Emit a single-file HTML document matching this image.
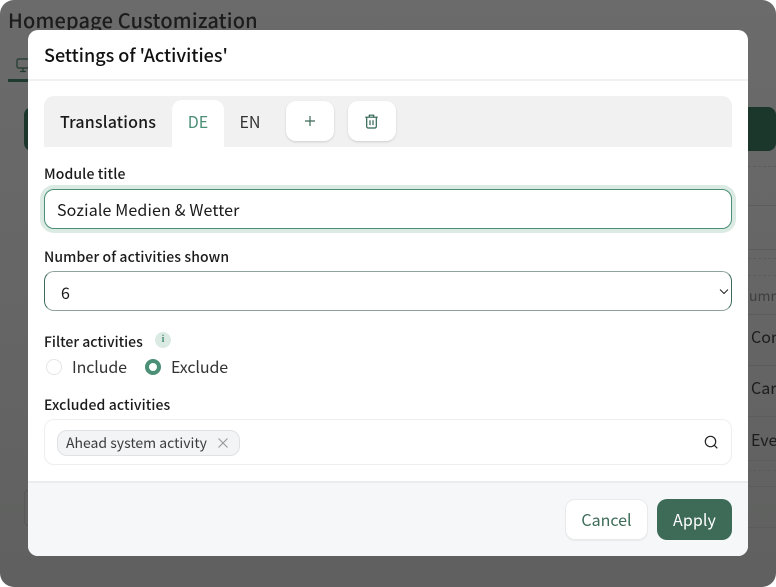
<!DOCTYPE html>
<html><head><meta charset="utf-8"><style>
*{box-sizing:border-box}
html,body{margin:0;padding:0}
body{width:776px;height:587px;position:relative;overflow:hidden;background:#fff;font-family:"Noto Sans CJK JP","Liberation Sans",sans-serif;}
.a{position:absolute;white-space:nowrap}
.l{font-size:14px;font-weight:500;color:#1a1a1a;line-height:18px;left:44px;letter-spacing:.11px}
.hl{position:absolute;height:1px;background:#5c5c5c;left:748px;width:28px}
.dl{position:absolute;border-top:1px dashed #5c5c5c;left:748px;width:28px}
</style></head><body>
<div class="a" style="left:0;top:0;width:776px;height:587px;border-radius:14px;background:linear-gradient(#6b6b6b,#5f605f);overflow:hidden">
<div class="a" style="left:8px;top:6px;font-size:20px;font-weight:500;line-height:28px;color:#1c1c1c;letter-spacing:.18px">Homepage Customization</div>
<svg class="a" style="left:16px;top:58px" width="14" height="15" viewBox="0 0 14 15" fill="none" stroke="#1f3a2f" stroke-width="1.2"><rect x="1" y="1" width="12" height="9" rx="1.5"/><path d="M7 10v3M4 13.5h6"/></svg>
<div class="a" style="left:8px;top:79px;width:30px;height:3px;background:#1f3a2f"></div>
<div class="a" style="left:24px;top:107px;width:752px;height:44px;border-radius:8px;background:#1b362b"></div>
<div class="hl" style="top:205px"></div><div class="dl" style="top:166px"></div>
<div class="hl" style="top:249px"></div><div class="dl" style="top:258px"></div><div class="dl" style="top:275px"></div>
<div class="hl" style="top:314px"></div><div class="hl" style="top:365px"></div><div class="hl" style="top:416px"></div><div class="hl" style="top:460px"></div><div class="dl" style="top:470px"></div><div class="hl" style="top:486px"></div><div class="hl" style="top:527px"></div>
<div class="a" style="left:749px;top:287px;font-size:14px;line-height:18px;color:#3e3e3e">umn</div>
<div class="a" style="left:751px;top:326px;font-size:16px;line-height:20px;color:#1c1c1c">Con</div>
<div class="a" style="left:751px;top:377px;font-size:16px;line-height:20px;color:#1c1c1c">Car</div>
<div class="a" style="left:751px;top:429px;font-size:16px;line-height:20px;color:#1c1c1c">Eve</div>
<div class="a" style="left:24px;top:490px;width:8px;height:36px;border:1px solid #585858;border-radius:6px"></div>
</div>

<div class="a" style="left:28px;top:30px;width:720px;height:526px;background:#fff;border-radius:10px;overflow:hidden">
<div class="a" style="left:16px;top:12px;font-size:18px;font-weight:500;line-height:26px;color:#111">Settings of 'Activities'</div>
<div class="a" style="left:0;top:49px;width:720px;height:2px;background:#f1f1f2"></div>
<div class="a" style="left:0;top:451px;width:720px;height:75px;background:#f6f7f9;border-top:2px solid #ebecee"></div>
</div>

<div class="a" style="left:44px;top:96px;width:688px;height:51px;background:#f1f1f1;border-radius:10px 10px 0 0"></div>
<div class="a" style="left:60px;top:110px;font-size:16px;font-weight:500;line-height:22px;color:#1a1a1a;letter-spacing:.17px">Translations</div>
<div class="a" style="left:172px;top:100px;width:52px;height:47px;background:#fff;border-radius:10px 10px 0 0"></div>
<div class="a" style="left:172px;top:110px;width:52px;text-align:center;font-size:16px;line-height:22px;color:#4a8f76">DE</div>
<div class="a" style="left:224px;top:110px;width:52px;text-align:center;font-size:16px;line-height:22px;color:#333">EN</div>
<div class="a" style="left:286px;top:101px;width:48px;height:40px;background:#fff;border-radius:10px;box-shadow:0 1px 2px rgba(0,0,0,.14)"></div>
<svg class="a" style="left:303px;top:114px" width="14" height="14" viewBox="0 0 14 14" stroke="#3d6b58" stroke-width="1.2" fill="none"><path d="M7 2v10M2 7h10"/></svg>
<div class="a" style="left:348px;top:101px;width:48px;height:40px;background:#fff;border-radius:10px;box-shadow:0 1px 2px rgba(0,0,0,.14)"></div>
<svg class="a" style="left:364px;top:114px" width="15" height="15" viewBox="0 0 15 15" stroke="#2f6350" stroke-width="1.2" fill="none"><path d="M1.2 3.2h12.6M5.3 3V1.2h4.4V3M2.7 3.4V12.5a1.5 1.5 0 0 0 1.5 1.5h6.6a1.5 1.5 0 0 0 1.5-1.5V3.4M6 6.3v4.8M9 6.3v4.8"/></svg>

<div class="a l" style="top:165px">Module title</div>
<div class="a" style="left:40px;top:185px;width:696px;height:48px;border-radius:14px;background:#dceae4"></div>
<div class="a" style="left:44px;top:189px;width:688px;height:40px;border-radius:10px;background:#fff;border:1px solid #4a8f76"></div>
<div class="a" style="left:57px;top:199px;font-size:16px;line-height:21px;color:#1a1a1a;letter-spacing:.14px">Soziale Medien &amp; Wetter</div>

<div class="a l" style="top:248px">Number of activities shown</div>
<div class="a" style="left:44px;top:271px;width:688px;height:40px;border-radius:10px;background:#fff;border:1px solid #8fa39b;border-left-color:#3d6b58;border-right-color:#3d6b58"></div>
<div class="a" style="left:61px;top:282px;font-size:16px;line-height:21px;color:#1a1a1a">6</div>
<svg class="a" style="left:719px;top:288px" width="10" height="7" viewBox="0 0 10 7" stroke="#222" stroke-width="1" fill="none"><path d="M1 1.5l4 4 4-4"/></svg>

<div class="a l" style="top:333px;letter-spacing:0">Filter activities</div>
<div class="a" style="left:155px;top:332px;width:16px;height:16px;border-radius:50%;background:#dceae4;color:#4a8f76;font:700 10px/16px 'Liberation Serif',serif;text-align:center">i</div>
<div class="a" style="left:46px;top:359px;width:16px;height:16px;border-radius:50%;background:#fff;border:1px solid #e5e5e5"></div>
<div class="a" style="left:72px;top:356px;font-size:16px;line-height:21px;color:#333;letter-spacing:-.1px">Include</div>
<div class="a" style="left:145px;top:359px;width:16px;height:16px;border-radius:50%;background:#fff;border:4.5px solid #4a8f76"></div>
<div class="a" style="left:171px;top:356px;font-size:16px;line-height:21px;color:#333;letter-spacing:-.1px">Exclude</div>

<div class="a l" style="top:396px">Excluded activities</div>
<div class="a" style="left:44px;top:419px;width:688px;height:46px;border-radius:10px;background:#fff;border:1px solid #eeeeee"></div>
<div class="a" style="left:57px;top:430px;width:183px;height:26px;border-radius:10px;background:#f3f4f5;border:1px solid #e0e1e3"></div>
<div class="a" style="left:66px;top:434px;font-size:14px;line-height:18px;color:#3c3c3c">Ahead system activity</div>
<svg class="a" style="left:217px;top:437px" width="12" height="12" viewBox="0 0 12 12" stroke="#999" stroke-width="1.1" fill="none"><path d="M1.5 1.5l9 9M10.500 1.500l-9 9"/></svg>
<svg class="a" style="left:703px;top:434px" width="16" height="16" viewBox="0 0 16 16" stroke="#222" stroke-width="1.2" fill="none"><circle cx="7.500" cy="7.500" r="5.200"/><path d="M11.300 11.300l3 3"/></svg>

<div class="a" style="left:565px;top:499px;width:83px;height:41px;border-radius:10px;background:#fff;border:1px solid #e9eaec;box-shadow:0 1px 1px rgba(0,0,0,.05)"></div>
<div class="a" style="left:565px;top:509px;width:83px;text-align:center;font-size:16px;line-height:21px;color:#3d6b58">Cancel</div>
<div class="a" style="left:657px;top:499px;width:75px;height:41px;border-radius:10px;background:#3d6b58"></div>
<div class="a" style="left:657px;top:509px;width:75px;text-align:center;font-size:16px;line-height:21px;color:#fff;letter-spacing:.1px">Apply</div>
</body></html>
